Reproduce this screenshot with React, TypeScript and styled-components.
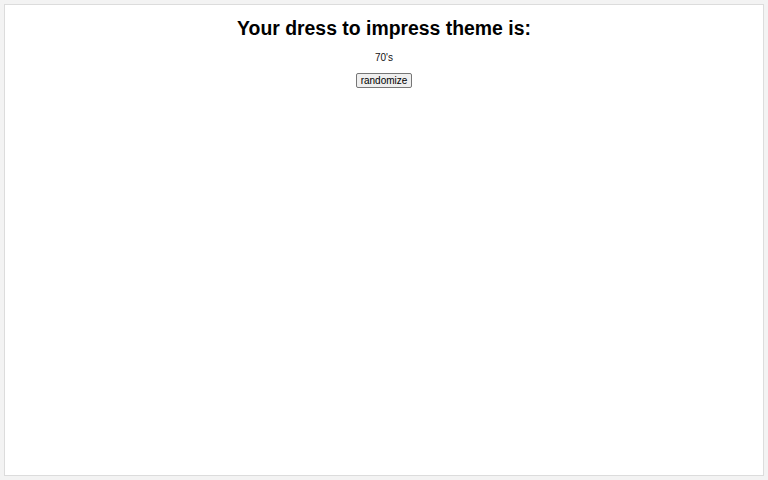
import React, { useState } from "react";
import styled, { createGlobalStyle } from "styled-components";

const Global = createGlobalStyle`
  html, body { margin: 0; padding: 0; }
  body {
    background: #f3f3f3;
    font-family: "Liberation Sans", Arial, sans-serif;
  }
`;

const Page = styled.div`
  padding: 4px;
  height: 480px;
  box-sizing: border-box;
`;

const Panel = styled.main`
  background: #ffffff;
  border: 1px solid #dcdcdc;
  height: 472px;
  box-sizing: border-box;
  display: flex;
  flex-direction: column;
  align-items: center;
  padding-top: 12px;
`;

const Title = styled.h1`
  margin: 0;
  font-size: 19.4px;
  font-weight: bold;
  color: #000;
  line-height: 23px;
`;

const Theme = styled.p`
  margin: 12px 0 0;
  font-size: 10px;
  color: #111;
  line-height: 12px;
`;

const Button = styled.button`
  margin-top: 9px;
  font-family: "Liberation Sans", Arial, sans-serif;
  font-size: 10px;
  padding: 1px 4px;
  background: #efefef;
  border: 1px solid #767676;
  border-radius: 2px;
  color: #000;
  line-height: 11px;
`;

const themes = ["70's", "80's", "Y2K", "Beach Day", "Royalty", "Space", "Retro"];

export default function App() {
  const [theme, setTheme] = useState("70's");
  return (
    <>
      <Global />
      <Page>
        <Panel>
          <Title>Your dress to impress theme is:</Title>
          <Theme>{theme}</Theme>
          <Button onClick={() => setTheme(themes[Math.floor(Math.random() * themes.length)])}>
            randomize
          </Button>
        </Panel>
      </Page>
    </>
  );
}
